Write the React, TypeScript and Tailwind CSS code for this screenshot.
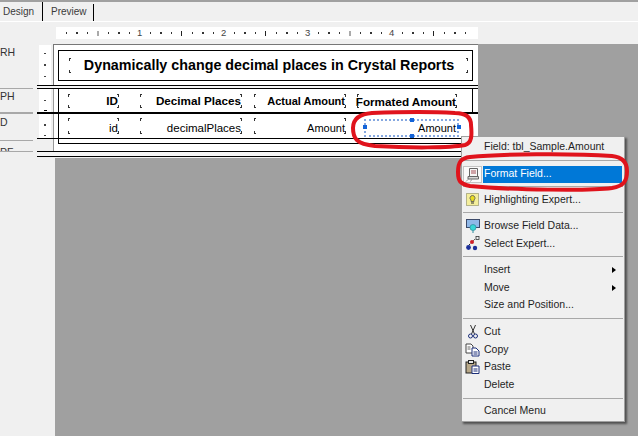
import type { ReactNode } from "react";

const red = "#e0131c";

function Corners() {
  return (
    <>
      <span className="absolute left-0 top-0 h-[3px] w-[2px] border-l border-t border-[#333]" />
      <span className="absolute bottom-0 left-0 h-[3px] w-[2px] border-b border-l border-[#333]" />
      <span className="absolute right-0 top-0 h-[3px] w-[2px] border-r border-t border-[#333]" />
      <span className="absolute bottom-0 right-0 h-[3px] w-[2px] border-b border-r border-[#333]" />
    </>
  );
}

function Field({ text, className }: { text: string; className: string }) {
  return (
    <div className={`relative flex shrink-0 justify-end whitespace-nowrap pr-[1px] text-black ${className}`}>
      <Corners />
      <span>{text}</span>
    </div>
  );
}

function SectionLabel({ text, className = "" }: { text: string; className?: string }) {
  return <div className={`w-[39px] shrink-0 overflow-hidden text-[10.5px] leading-[12px] text-[#333] ${className}`}>{text}</div>;
}

function Item({ label, icon, arrow }: { label: string; icon?: ReactNode; arrow?: boolean }) {
  return (
    <div className="flex h-[17.6px] items-center pl-[1px] pr-[8px] text-[#1f1f1f]">
      <span className="flex w-[19px] shrink-0 justify-center">{icon}</span>
      <span className="ml-[2px] flex-1 whitespace-nowrap">{label}</span>
      {arrow && <span className="h-0 w-0 border-y-[3.5px] border-l-[4px] border-y-transparent border-l-black" />}
    </div>
  );
}

function Sep({ className = "my-[4px]" }: { className?: string }) {
  return <div className={`mx-[1px] h-px bg-[#a8a8a8] ${className}`} />;
}

function HighlightIcon() {
  return (
    <svg width="13" height="13" viewBox="0 0 13 13">
      <rect x="0.5" y="0.5" width="12" height="12" fill="#f4ee9c" stroke="#77774a" strokeDasharray="1 1" />
      <path d="M6.5 2.5a2.5 2.5 0 0 1 1.5 4.5v1.5H5V7a2.5 2.5 0 0 1 1.5-4.5z" fill="#e8dc20" stroke="#555" strokeWidth="0.8" />
      <path d="M5 10h3" stroke="#333" />
    </svg>
  );
}

function BrowseIcon() {
  return (
    <svg width="14" height="14" viewBox="0 0 14 14">
      <rect x="0.5" y="0.5" width="13" height="8" fill="#8fb8e8" stroke="#3c4a6a" />
      <circle cx="7" cy="8.5" r="3" fill="#38d6d6" stroke="#2a8a9a" strokeWidth="0.7" />
      <path d="M7 11.5V14" stroke="#2a8a9a" />
    </svg>
  );
}

function SelectIcon() {
  return (
    <svg width="15" height="15" viewBox="0 0 15 15">
      <path d="M4 9 10 3" stroke="#222" strokeDasharray="1.5 1" />
      <circle cx="7" cy="6" r="2" fill="#d0202a" />
      <rect x="11" y="0.5" width="3" height="3" fill="none" stroke="#333" strokeWidth="0.8" />
      <circle cx="3.5" cy="11.5" r="2.4" fill="#1c2f9a" />
      <circle cx="10" cy="12" r="2.2" fill="#1c2f9a" />
    </svg>
  );
}

function FormatIcon() {
  return (
    <svg width="15" height="15" viewBox="0 0 15 15">
      <path d="M4.5 1.5h8v8h-8z" fill="#f6f6f6" stroke="#666" />
      <path d="M6 4h5M6 6h5" stroke="#a85058" />
      <path d="M3 9.5h10.5v2.5H3z" fill="#d8d8d8" stroke="#666" />
      <path d="M3.5 12 1 14.5M7 12l-1.5 2.5" stroke="#999" />
    </svg>
  );
}

function CutIcon() {
  return (
    <svg width="12" height="15" viewBox="0 0 12 15">
      <path d="M3.5 1 7.5 10M8.5 1 4.5 10" stroke="#333" fill="none" />
      <circle cx="3.5" cy="12" r="2" fill="none" stroke="#1c2f7a" />
      <circle cx="8.5" cy="12" r="2" fill="none" stroke="#1c2f7a" />
    </svg>
  );
}

function CopyIcon() {
  return (
    <svg width="15" height="14" viewBox="0 0 15 14">
      <path d="M1 1h5l2 2v7H1z" fill="#fff" stroke="#444" />
      <path d="M2.5 4h3M2.5 6h3" stroke="#666" />
      <path d="M7 5h4l3 3v5H7z" fill="#fff" stroke="#1c2f7a" />
      <path d="M8.5 9h4M8.5 11h4" stroke="#1c2f7a" />
    </svg>
  );
}

function PasteIcon() {
  return (
    <svg width="15" height="14" viewBox="0 0 15 14">
      <rect x="1" y="2" width="10" height="11" fill="#b8a888" stroke="#222" />
      <rect x="3.5" y="0.5" width="5" height="3" fill="#e8e8e8" stroke="#222" />
      <path d="M7 6h7v7.5H7z" fill="#fff" stroke="#1c2f7a" />
      <path d="M8.5 9h4M8.5 11h4" stroke="#1c2f7a" />
    </svg>
  );
}

// one inch is 84px on the ruler, a mark every 10.5px
const rulerMarks = ["d", "d", "d", "g", "d", "d", "d", "1", "d", "d", "d", "t", "d", "d", "d", "2", "d", "d", "d", "t", "d", "d", "d", "3", "d", "d", "d", "g", "d", "d", "d", "4", "d", "d", "d", "t", "d", "d", "d"];

function Ruler() {
  return (
    <div className="flex h-[12px] w-[422px] items-center bg-white pl-[5px]">
      {rulerMarks.map((m, i) => (
        <span key={i} className="flex w-[10.5px] shrink-0 items-center justify-center text-[9.5px] leading-none text-[#444]">
          {m === "d" && <span className="size-[1.5px] bg-[#333]" />}
          {m === "t" && <span className="h-[5px] w-px bg-[#222]" />}
          {m === "g" && <span className="h-[5px] w-[1.5px] bg-[#aaa]" />}
          {m !== "d" && m !== "t" && m !== "g" && m}
        </span>
      ))}
    </div>
  );
}

function VDot({ dash }: { dash?: boolean }) {
  return <span className={dash ? "h-px w-[3px] bg-black" : "h-[1.5px] w-[1.5px] bg-[#444]"} />;
}

export default function App() {
  return (
    <div className="relative flex h-[436px] w-[638px] flex-col overflow-hidden bg-[#f0f0f0] font-['Liberation_Sans',sans-serif]">
      <div className="h-[2px] shrink-0 bg-[#a0a0a0]" />

      {/* tabs */}
      <div className="flex h-[19px] shrink-0 text-[10px] leading-[20px] text-[#3a3a3a]">
        <div className="h-full w-[43px] border-r border-black pl-[3px]">Design</div>
        <div className="mt-[2px] h-[17px] w-[51px] border-r border-black pl-[8px] leading-[16px]">Preview</div>
      </div>
      <div className="h-px shrink-0 bg-white" />

      {/* horizontal ruler */}
      <div className="h-[22px] shrink-0 pl-[56px] pt-[5px]">
        <Ruler />
      </div>

      <div className="flex min-h-0 flex-1 flex-col bg-[#a0a0a0]">
        <div className="w-[478px] shrink-0 bg-[#f0f0f0]">
          {/* report header */}
          <div className="flex h-[41px]">
            <SectionLabel text="RH" className="pt-[2px]" />
            <div className="mt-[1px] flex w-[12px] shrink-0 flex-col items-center justify-around bg-white py-[3px]">
              <VDot />
              <VDot />
              <VDot />
            </div>
            <div className="ml-[2px] flex-1 border-l border-t border-[#777] bg-white pl-[4px] pr-[5px] pt-[5px]">
              <div className="relative flex h-[31px] items-center justify-center border border-black pl-[7px] text-[14.3px] font-bold text-black">
                <span className="absolute inset-x-[10px] inset-y-[7px] right-[4px]">
                  <Corners />
                </span>
                Dynamically change decimal places in Crystal Reports
              </div>
            </div>
          </div>

          {/* section line */}
          <div className="flex h-[4px]">
            <div className="h-[4px] w-[33px] shrink-0 border-b border-[#a8a8a8]" />
            <div className="ml-[4px] h-[4px] flex-1 border-y border-black bg-[#f4f4f4]" />
          </div>

          {/* page header */}
          <div className="flex h-[23px]">
            <SectionLabel text="PH" className="pt-[1px]" />
            <div className="flex w-[12px] shrink-0 flex-col items-center justify-end gap-[9px] bg-white pb-[1px]">
              <VDot />
              <VDot dash />
            </div>
            <div className="ml-[2px] flex-1 border-l border-[#999] bg-white pl-[4px] pr-[5px]">
              <div className="flex h-full items-center border-x border-black text-[11.7px] font-bold leading-[14px]">
                <Field text="ID" className="ml-[9px] h-[14px] w-[51px]" />
                <Field text="Decimal Places" className="ml-[21px] h-[14px] w-[102px]" />
                <Field text="Actual Amount" className="ml-[12px] h-[14px] w-[92px] text-[11px]" />
                <Field text="Formated Amount" className="ml-[11px] h-[14px] w-[100px] leading-[16px]" />
              </div>
            </div>
          </div>

          <div className="flex h-[2px]">
            <div className="h-[2px] w-[33px] shrink-0 bg-[#a8a8a8]" />
            <div className="ml-[4px] flex-1 bg-black" />
          </div>

          {/* details */}
          <div className="flex h-[24px]">
            <SectionLabel text="D" className="pt-[2px]" />
            <div className="flex w-[12px] shrink-0 flex-col items-center gap-[9px] bg-white pt-[10px]">
              <VDot />
              <VDot />
            </div>
            <div className="ml-[2px] flex-1 border-l border-[#999] bg-white pl-[4px] pr-[5px]">
              <div className="flex h-full items-start border-l border-black pt-[4px] text-[11.5px] leading-[20px]">
                <Field text="id" className="ml-[9px] h-[16px] w-[51px]" />
                <Field text="decimalPlaces" className="ml-[21px] h-[16px] w-[102px]" />
                <Field text="Amount" className="ml-[12px] h-[16px] w-[92px] text-[11px]" />
                <div className="relative ml-[18px] mt-[1px] flex h-[18px] w-[95px] shrink-0 justify-end border-2 border-dotted border-[#86a8e0] pr-[1px] leading-[15px] text-black">
                  <span className="text-[11px]">Amount</span>
                  <span className="absolute left-[-3px] top-[4px] size-[4px] bg-[#1464d8]" />
                  <span className="absolute right-[-4px] top-[4px] size-[4px] bg-[#1464d8]" />
                  <span className="absolute left-[44px] top-[-3px] size-[4px] bg-[#1464d8]" />
                  <span className="absolute bottom-[-3px] left-[44px] size-[4px] bg-[#1464d8]" />
                </div>
              </div>
            </div>
          </div>

          <div className="flex h-px">
            <div className="w-[37px] shrink-0" />
            <div className="flex-1 bg-black" />
          </div>

          {/* page footer, cut off by the window of the design tab */}
          <div className="flex h-[12px]">
            <div className="w-[37px] shrink-0">
              <div className="mt-px h-px w-[33px] bg-[#a8a8a8]" />
              <div className="h-[10px] overflow-hidden pt-[5px] text-[10.5px] leading-[12px] text-[#333]">PF</div>
            </div>
            <div className="w-[2px] shrink-0" />
            <div className="w-[12px] shrink-0" />
            <div className="ml-[2px] flex-1 border-l border-[#999] bg-white pl-[4px] pr-[5px]">
              <div className="h-[5px] w-[405px] border-b border-l border-black" />
            </div>
          </div>

          <div className="flex h-[6px]">
            <div className="h-[1px] w-[33px] shrink-0 bg-[#a8a8a8]" />
            <div className="ml-[4px] flex-1 border-y border-black bg-[#f4f4f4]" />
          </div>
          <div className="h-[1px] bg-[#f0f0f0]" />
        </div>
        <div className="w-[55px] flex-1 bg-[#f0f0f0]" />
      </div>

      {/* context menu */}
      <div className="absolute left-[461px] top-[136px] w-[164px] border border-[#a0a0a0] bg-[#f0f0f0] py-[1px] text-[10.5px] shadow-[2px_2px_2px_rgba(0,0,0,0.5)]">
        <Item label="Field: tbl_Sample.Amount" />
        <Sep className="my-[4.5px]" />
        <div className="flex h-[17px] items-center pl-[1px] pr-[2px]">
          <span className="flex h-[17px] w-[19px] shrink-0 items-center justify-center border border-[#c4c4c4] bg-[#fafafa]">
            <FormatIcon />
          </span>
          <span className="ml-px flex h-[17px] flex-1 items-center bg-[#0078d7] pl-px text-white">Format Field...</span>
        </div>
        <Sep className="my-[3.5px]" />
        <Item label="Highlighting Expert..." icon={<HighlightIcon />} />
        <Sep />
        <Item label="Browse Field Data..." icon={<BrowseIcon />} />
        <Item label="Select Expert..." icon={<SelectIcon />} />
        <Sep />
        <Item label="Insert" arrow />
        <Item label="Move" arrow />
        <Item label="Size and Position..." />
        <Sep />
        <Item label="Cut" icon={<CutIcon />} />
        <Item label="Copy" icon={<CopyIcon />} />
        <Item label="Paste" icon={<PasteIcon />} />
        <Item label="Delete" />
        <Sep />
        <Item label="Cancel Menu" />
      </div>

      {/* red marker outlines drawn over the screenshot */}
      <svg className="absolute left-0 top-0" width="638" height="436" fill="none" stroke={red} strokeWidth="4">
        <path d="M372 113C360 114 353 118 353 128C353 138 356 144 375 146C410 148 450 148 465 145C472 143 472 135 471 125C471 117 466 113 455 113C425 111 395 112 372 113Z" />
        <path d="M470 157C461 158 458 162 458 172C458 181 460 184 470 186C510 190 590 191 612 188C624 186 627 181 627 171C627 162 622 157 612 156C570 153 500 154 470 157Z" />
      </svg>
    </div>
  );
}
